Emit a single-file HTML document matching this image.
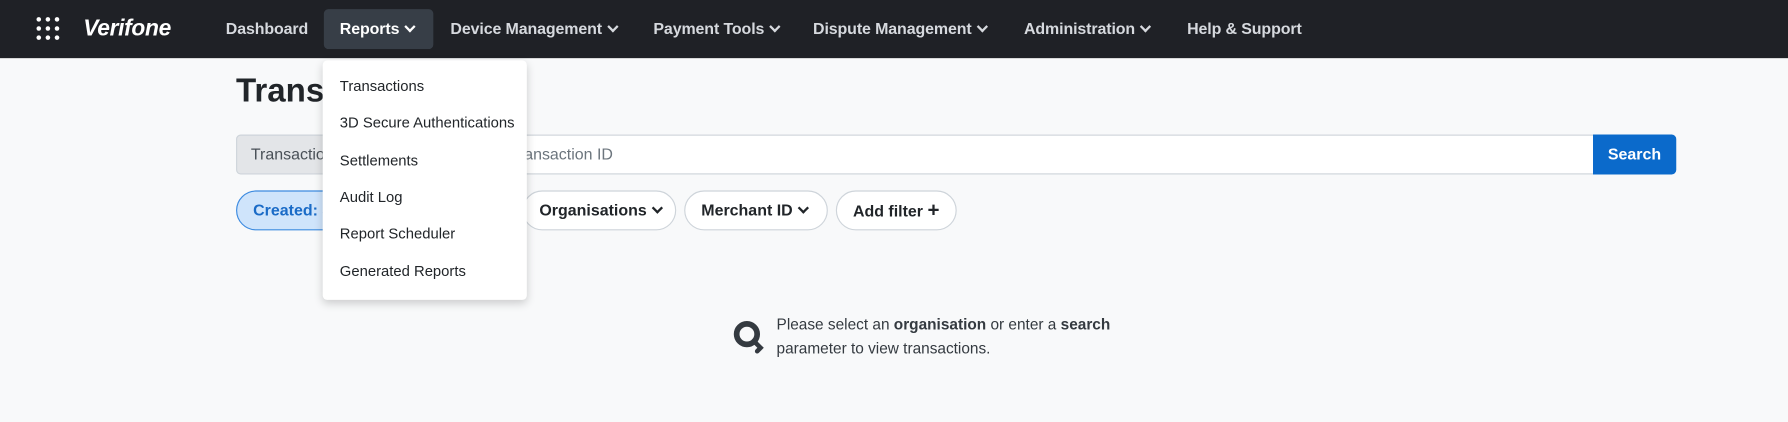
<!DOCTYPE html>
<html><head><meta charset="utf-8"><style>
*{box-sizing:border-box;margin:0;padding:0}
html,body{width:1788px;height:422px;overflow:hidden;background:#f8f9fa}
#w{position:absolute;left:0;top:0;width:1568px;height:370px;transform:scale(1.14031);transform-origin:0 0;font-family:"Liberation Sans",sans-serif;color:#212529}
.nav{position:absolute;left:0;top:0;width:1568px;height:51px;background:#1f2126}
.ni{position:absolute;top:17px;font-size:14px;font-weight:bold;color:#d6d9de;white-space:nowrap;letter-spacing:-0.1px}
.chev{display:inline-block;width:7px;height:7px;border-right:2px solid #d6d9de;border-bottom:2px solid #d6d9de;transform:rotate(45deg);margin-left:6px;position:relative;top:-3px}
.dot{position:absolute;width:4px;height:4px;border-radius:50%;background:#fff}
.title{position:absolute;left:207px;top:64px;font-size:29px;font-weight:bold}
.ig{position:absolute;top:118px;height:35px;border:1px solid #ced4da}
.pill{position:absolute;top:167px;height:35px;border:1px solid #ced4da;border-radius:18px;background:#fff;font-size:14px;font-weight:bold;padding:8px 14px;white-space:nowrap}
.pill .chev{border-color:#212529}
.dd{position:absolute;left:283px;top:53px;width:179px;height:210px;background:#fff;border-radius:4px;box-shadow:0 3px 8px rgba(0,0,0,.18)}
.dd div{position:absolute;left:15px;font-size:13px;color:#212529}
</style></head><body><div id="w">
<div class="nav">
<div class="dot" style="left:32px;top:15px"></div><div class="dot" style="left:40px;top:15px"></div><div class="dot" style="left:48px;top:15px"></div>
<div class="dot" style="left:32px;top:23px"></div><div class="dot" style="left:40px;top:23px"></div><div class="dot" style="left:48px;top:23px"></div>
<div class="dot" style="left:32px;top:31px"></div><div class="dot" style="left:40px;top:31px"></div><div class="dot" style="left:48px;top:31px"></div>
<div style="position:absolute;left:73px;top:14px;font-size:20px;font-weight:bold;font-style:italic;color:#fff;letter-spacing:-0.3px">Verifone</div>
<div class="ni" style="left:198px">Dashboard</div>
<div style="position:absolute;left:284px;top:8px;width:96px;height:35px;background:#373e47;border-radius:4px"></div>
<div class="ni" style="left:298px;color:#fff">Reports<span class="chev" style="border-color:#fff"></span></div>
<div class="ni" style="left:395px">Device Management<span class="chev"></span></div>
<div class="ni" style="left:573px">Payment Tools<span class="chev"></span></div>
<div class="ni" style="left:713px">Dispute Management<span class="chev"></span></div>
<div class="ni" style="left:898px">Administration<span class="chev"></span></div>
<div class="ni" style="left:1041px">Help &amp; Support</div>
</div>
<div class="title">Transactions</div>
<div class="ig" style="left:207px;width:230px;background:#e3e5e8;border-radius:4px 0 0 4px;font-size:14px;color:#495057;padding:8px 12px">Transaction ID</div>
<div class="ig" style="left:436px;width:962px;background:#fff;border-left:none;font-size:14px;color:#6c757d;padding:8px 11px">Transaction ID</div>
<div class="ig" style="left:1397px;width:73px;background:#0b6acb;border-color:#0b6acb;border-radius:0 4px 4px 0;color:#fff;font-size:14px;font-weight:bold;padding:8px 12px">Search</div>
<div class="pill" style="left:207px;width:240px;background:#cfe4fb;border-color:#3d8be0;color:#1a6bc7">Created: 30 days</div>
<div class="pill" style="left:458px;width:135px">Organisations<span class="chev"></span></div>
<div class="pill" style="left:600px;width:126px">Merchant ID<span class="chev"></span></div>
<div class="pill" style="left:733px;width:106px;padding-top:7px">Add filter <span style="font-size:18px;line-height:18px">+</span></div>
<div class="dd">
<div style="top:15px">Transactions</div>
<div style="top:47px">3D Secure Authentications</div>
<div style="top:80px">Settlements</div>
<div style="top:112px">Audit Log</div>
<div style="top:144px">Report Scheduler</div>
<div style="top:177px">Generated Reports</div>
</div>
<svg style="position:absolute;left:642px;top:280px" width="32" height="32" viewBox="0 0 32 32"><circle cx="13" cy="13" r="9" fill="none" stroke="#343a40" stroke-width="5"/><path d="M19 19 L25 25 L22 28" fill="none" stroke="#343a40" stroke-width="4" stroke-linecap="round"/></svg>
<div style="position:absolute;left:681px;top:274px;font-size:13.5px;line-height:21px;color:#343a40">Please select an <b>organisation</b> or enter a <b>search</b><br>parameter to view transactions.</div>
</div></body></html>
